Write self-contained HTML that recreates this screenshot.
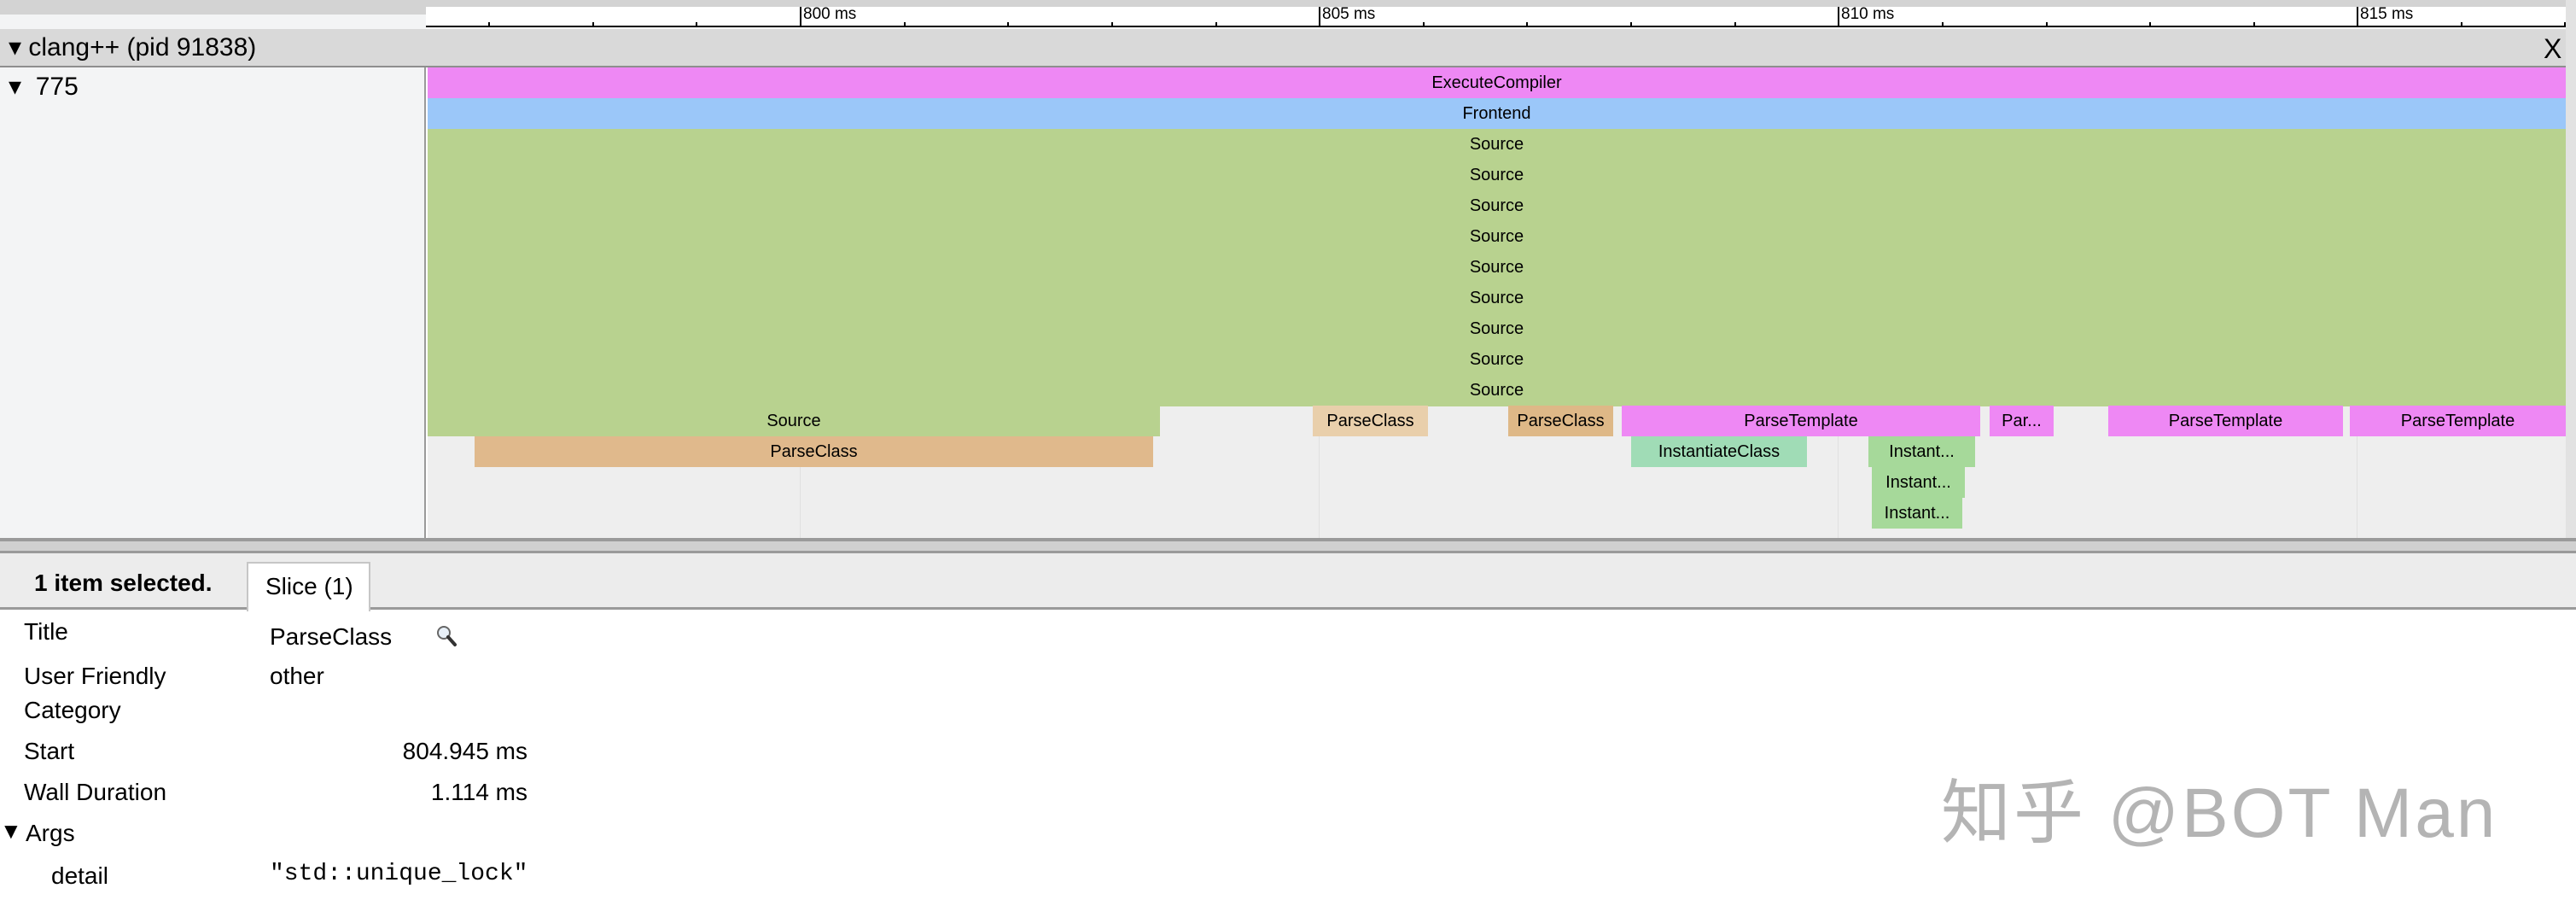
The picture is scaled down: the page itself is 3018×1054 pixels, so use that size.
<!DOCTYPE html>
<html><head><meta charset="utf-8"><style>
*{margin:0;padding:0;box-sizing:border-box}
body{width:3018px;height:1054px;position:relative;background:#fff;font-family:"Liberation Sans",Arial,sans-serif;overflow:hidden}
.a{position:absolute}
.s{position:absolute;height:36px;font-size:20px;line-height:36px;text-align:center;color:#000;white-space:nowrap;overflow:hidden}
.pk{background:#ee88f4}.bl{background:#9bc7f9}.gr{background:#b8d28f}.tn{background:#deb887}.lt{background:#e9cfab}.ic{background:#a0dcb6}.in{background:#a6d99a}
.lab{position:absolute;font-size:28px;color:#000}
</style></head><body>
<div class="a" style="left:0;top:0;width:3018px;height:17px;background:#d3d3d3"></div>
<div class="a" style="left:0;top:17px;width:499px;height:17px;background:#f3f4f5"></div>
<div class="a" style="left:499px;top:8px;width:2507px;height:24px;background:#fff;border-bottom:2px solid #000"></div>
<div class="a" style="left:3006px;top:0;width:12px;height:648px;background:#e2e2e2"></div>
<!-- ticks -->
<div class="a" style="left:572px;top:26px;width:2px;height:6px;background:#000"></div>
<div class="a" style="left:694px;top:26px;width:2px;height:6px;background:#000"></div>
<div class="a" style="left:815px;top:26px;width:2px;height:6px;background:#000"></div>
<div class="a" style="left:937px;top:8px;width:2px;height:24px;background:#000"></div>
<div class="a" style="left:1059px;top:26px;width:2px;height:6px;background:#000"></div>
<div class="a" style="left:1180px;top:26px;width:2px;height:6px;background:#000"></div>
<div class="a" style="left:1302px;top:26px;width:2px;height:6px;background:#000"></div>
<div class="a" style="left:1424px;top:26px;width:2px;height:6px;background:#000"></div>
<div class="a" style="left:1545px;top:8px;width:2px;height:24px;background:#000"></div>
<div class="a" style="left:1667px;top:26px;width:2px;height:6px;background:#000"></div>
<div class="a" style="left:1788px;top:26px;width:2px;height:6px;background:#000"></div>
<div class="a" style="left:1910px;top:26px;width:2px;height:6px;background:#000"></div>
<div class="a" style="left:2032px;top:26px;width:2px;height:6px;background:#000"></div>
<div class="a" style="left:2153px;top:8px;width:2px;height:24px;background:#000"></div>
<div class="a" style="left:2275px;top:26px;width:2px;height:6px;background:#000"></div>
<div class="a" style="left:2397px;top:26px;width:2px;height:6px;background:#000"></div>
<div class="a" style="left:2518px;top:26px;width:2px;height:6px;background:#000"></div>
<div class="a" style="left:2640px;top:26px;width:2px;height:6px;background:#000"></div>
<div class="a" style="left:2761px;top:8px;width:2px;height:24px;background:#000"></div>
<div class="a" style="left:2883px;top:26px;width:2px;height:6px;background:#000"></div>
<div class="a" style="left:3004px;top:26px;width:2px;height:6px;background:#000"></div>
<div class="a" style="left:941px;top:6px;font-size:19px">800 ms</div>
<div class="a" style="left:1549px;top:6px;font-size:19px">805 ms</div>
<div class="a" style="left:2157px;top:6px;font-size:19px">810 ms</div>
<div class="a" style="left:2765px;top:6px;font-size:19px">815 ms</div>
<!-- header -->
<div class="a" style="left:0;top:34px;width:3006px;height:45px;background:#d9d9d9;border-bottom:2px solid #8e8e8e"></div>
<div class="a" style="left:10px;top:38px;font-size:30px;line-height:36px">▾ clang++ (pid 91838)</div>
<div class="a" style="left:2980px;top:38px;font-size:32px;line-height:38px">X</div>
<!-- tracks -->
<div class="a" style="left:0;top:79px;width:499px;height:551px;background:#f3f4f5;border-right:2px solid #9a9a9a"></div>
<div class="a" style="left:501px;top:79px;width:2505px;height:551px;background:#eeeeee"></div>
<div class="a" style="left:937px;top:79px;width:1px;height:551px;background:#e0e0e0"></div>
<div class="a" style="left:1545px;top:79px;width:1px;height:551px;background:#e0e0e0"></div>
<div class="a" style="left:2153px;top:79px;width:1px;height:551px;background:#e0e0e0"></div>
<div class="a" style="left:2761px;top:79px;width:1px;height:551px;background:#e0e0e0"></div>
<div class="a" style="left:10px;top:84px;font-size:30px;line-height:36px">▾&nbsp;&nbsp;775</div>
<div class="s pk" style="left:501px;top:79px;width:2505px">ExecuteCompiler</div>
<div class="s bl" style="left:501px;top:115px;width:2505px">Frontend</div>
<div class="a gr" style="left:501px;top:151px;width:2505px;height:325px"></div>
<div class="s" style="left:501px;top:151px;width:2505px">Source</div>
<div class="s" style="left:501px;top:187px;width:2505px">Source</div>
<div class="s" style="left:501px;top:223px;width:2505px">Source</div>
<div class="s" style="left:501px;top:259px;width:2505px">Source</div>
<div class="s" style="left:501px;top:295px;width:2505px">Source</div>
<div class="s" style="left:501px;top:331px;width:2505px">Source</div>
<div class="s" style="left:501px;top:367px;width:2505px">Source</div>
<div class="s" style="left:501px;top:403px;width:2505px">Source</div>
<div class="s" style="left:501px;top:439px;width:2505px">Source</div>
<div class="s gr" style="left:501px;top:475px;width:858px">Source</div>
<div class="s lt" style="left:1538px;top:475px;width:135px">ParseClass</div>
<div class="s tn" style="left:1767px;top:475px;width:123px">ParseClass</div>
<div class="s pk" style="left:1900px;top:475px;width:420px">ParseTemplate</div>
<div class="s pk" style="left:2331px;top:475px;width:75px">Par...</div>
<div class="s pk" style="left:2470px;top:475px;width:275px">ParseTemplate</div>
<div class="s pk" style="left:2753px;top:475px;width:253px">ParseTemplate</div>
<div class="s tn" style="left:556px;top:511px;width:795px;background:#e0b98c">ParseClass</div>
<div class="s ic" style="left:1911px;top:511px;width:206px">InstantiateClass</div>
<div class="s in" style="left:2189px;top:511px;width:125px">Instant...</div>
<div class="s in" style="left:2193px;top:547px;width:109px">Instant...</div>
<div class="s in" style="left:2193px;top:583px;width:106px">Instant...</div>
<!-- separator -->
<div class="a" style="left:0;top:630px;width:3018px;height:4px;background:#9a9a9a"></div>
<div class="a" style="left:0;top:634px;width:3018px;height:14px;background:#d0d0d0;border-bottom:3px solid #9a9a9a"></div>
<div class="a" style="left:0;top:648px;width:3018px;height:66px;background:#ececec;border-bottom:3px solid #9a9a9a"></div>
<div class="a" style="left:40px;top:667px;font-size:28px;font-weight:bold">1 item selected.</div>
<div class="a" style="left:289px;top:658px;width:145px;height:58px;background:#fff;border:2px solid #c6c6c6;border-bottom:none;font-size:28px;line-height:54px;padding-left:20px">Slice (1)</div>
<!-- details -->
<div class="lab" style="left:28px;top:724px">Title</div>
<div class="lab" style="left:316px;top:730px">ParseClass</div>
<svg class="a" style="left:509px;top:730px" width="30" height="32" viewBox="0 0 30 32"><circle cx="11" cy="11" r="7" fill="#e8f0f8" stroke="#666" stroke-width="2"/><path d="M16 16 L24 25" stroke="#333" stroke-width="4" stroke-linecap="round"/></svg>
<div class="lab" style="left:28px;top:776px">User Friendly</div>
<div class="lab" style="left:316px;top:776px">other</div>
<div class="lab" style="left:28px;top:816px">Category</div>
<div class="lab" style="left:28px;top:864px">Start</div>
<div class="lab" style="left:300px;top:864px;width:318px;text-align:right">804.945 ms</div>
<div class="lab" style="left:28px;top:912px">Wall Duration</div>
<div class="lab" style="left:300px;top:912px;width:318px;text-align:right">1.114 ms</div>
<div class="lab" style="left:0;top:958px;font-size:26px">▼</div>
<div class="lab" style="left:30px;top:960px">Args</div>
<div class="lab" style="left:60px;top:1010px">detail</div>
<div class="lab" style="left:316px;top:1008px;font-family:'Liberation Mono',monospace;font-size:28px">"std::unique_lock"</div>
<div class="a" style="left:2274px;top:885px;font-size:82px;color:#b4b4b4;font-family:'Liberation Sans','Noto Sans CJK SC',sans-serif;white-space:nowrap;letter-spacing:3px">知乎 @BOT Man</div>
</body></html>
